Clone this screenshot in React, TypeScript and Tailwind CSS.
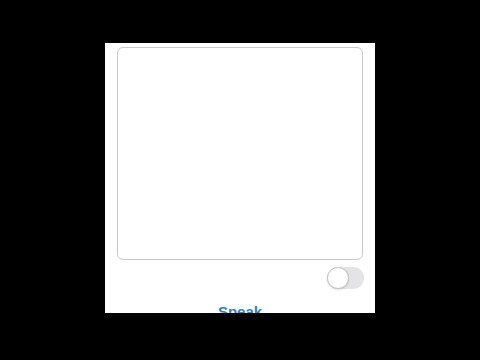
import { useState } from "react";

const App = () => {
  const [on, setOn] = useState(false);

  return (
    <div className="w-full h-[360px] bg-black flex justify-center pt-[43px] font-['Liberation_Sans',Arial,sans-serif]">
      <div className="w-[270px] h-[270px] bg-white overflow-hidden px-3 pt-1 flex flex-col">
        {/* Text input */}
        <textarea className="w-full h-[213px] shrink-0 rounded-md border border-[#c9c9c9] resize-none outline-none p-2 text-sm"></textarea>

        {/* Switch */}
        <div className="flex justify-end mt-[7px] -mr-[1px]">
          <button
            onClick={() => setOn(!on)}
            className={`relative w-[37px] h-[22px] rounded-full transition-colors ${
              on ? "bg-[#34c759]" : "bg-[#e4e4e6]"
            }`}
          >
            <span
              className={`absolute top-0 w-[22px] h-[22px] rounded-full bg-white border border-[#c4c4c4] shadow-sm transition-all ${
                on ? "left-[15px]" : "left-0"
              }`}
            ></span>
          </button>
        </div>

        {/* Speak button */}
        <button className="mt-[11px] self-center text-[15px] leading-6 font-bold text-[#2d7fc6]">
          Speak
        </button>
      </div>
    </div>
  );
};

export default App;
